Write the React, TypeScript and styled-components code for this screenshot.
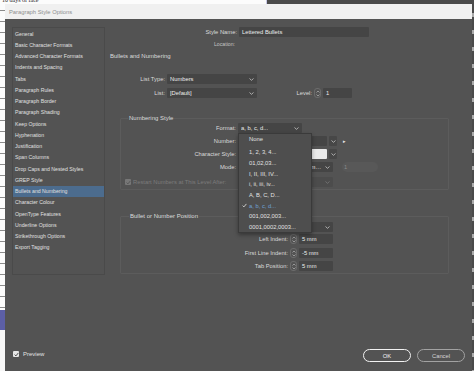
import React from 'react';
import styled, { createGlobalStyle } from 'styled-components';

const GlobalStyle = createGlobalStyle`
  html, body { margin: 0; padding: 0; background: #4b4b4b; }
  body {
    width: 474px;
    height: 371px;
    overflow: hidden;
    font-family: "Liberation Sans", Arial, sans-serif;
  }
  * { box-sizing: border-box; }
`;

const Screen = styled.div`
  width: 474px;
  height: 371px;
  display: flex;
  flex-direction: column;
  overflow: hidden;
`;

/* document visible behind the dialog */
const TopStrip = styled.div`
  height: 4px;
  flex-shrink: 0;
  display: flex;
`;

const TopDoc = styled.div`
  width: 267px;
  background: #fcfcfc;
  overflow: hidden;
  border-right: 1px solid #c9c9e6;
  span {
    display: block;
    margin: -3px 0 0 2px;
    font: 6px/6px "Liberation Serif", serif;
    color: #222;
  }
`;

const TopDark = styled.div`
  flex: 1;
  background: #4a4a4a;
`;

const Middle = styled.div`
  flex: 1;
  display: flex;
  min-height: 0;
`;

const LeftDoc = styled.div`
  width: 5px;
  flex-shrink: 0;
  display: flex;
  flex-direction: column;
  background: repeating-linear-gradient(
    to bottom,
    #fbfbfb 0 6px,
    #8a8a8a 6px 7px,
    #fbfbfb 7px 11px
  );
`;

const LeftGap = styled.div<{ $h: number }>`
  height: ${(p) => p.$h}px;
  flex-shrink: 0;
`;

const LeftBlock = styled.div`
  height: 20px;
  background: #5c5fa6;
`;

const LeftRest = styled.div`
  flex: 1;
  background: #f7f7f7;
`;

const RightStrip = styled.div`
  width: 2px;
  flex-shrink: 0;
  background: repeating-linear-gradient(
    to bottom,
    #4a4a4a 0 9px,
    #a9a9a9 9px 13px,
    #4a4a4a 13px 17px
  );
`;

/* dialog */
const Dialog = styled.div`
  width: 467px;
  flex-shrink: 0;
  display: flex;
  flex-direction: column;
  position: relative;
  background: #535353;
  color: #dadada;
`;

const TitleBar = styled.div`
  height: 15px;
  flex-shrink: 0;
  display: flex;
  align-items: center;
  padding-left: 4px;
  background: #f0f0f0;
  color: #8e8e8e;
  font-size: 5.8px;
`;

const Body = styled.div`
  flex: 1;
  display: flex;
  padding: 8px 0 0 7px;
  min-height: 0;
`;

const SideList = styled.div`
  width: 93px;
  height: 248px;
  flex-shrink: 0;
  border: 1px solid #4a4a4a;
  font-size: 5.2px;
  color: #e0e0e0;
`;

const SideItem = styled.div<{ $active?: boolean }>`
  height: 11.25px;
  display: flex;
  align-items: center;
  padding-left: 2px;
  white-space: nowrap;
  background: ${(p) => (p.$active ? '#4c6c8e' : 'transparent')};
`;

const Main = styled.div`
  margin-left: 5px;
  width: 362px;
  display: flex;
  flex-direction: column;
  font-size: 5.8px;
`;

const Row = styled.div<{ $mt?: number; $pl?: number }>`
  height: 10px;
  flex-shrink: 0;
  display: flex;
  align-items: center;
  gap: 2px;
  margin-top: ${(p) => p.$mt ?? 0}px;
  padding-left: ${(p) => p.$pl ?? 0}px;
`;

const Label = styled.div<{ $w: number; $left?: boolean; $dim?: boolean }>`
  width: ${(p) => p.$w}px;
  flex-shrink: 0;
  text-align: ${(p) => (p.$left ? 'left' : 'right')};
  white-space: nowrap;
  color: ${(p) => (p.$dim ? '#7c7c7c' : '#dadada')};
`;

const SmallLabel = styled(Label)`
  font-size: 5.2px;
  color: #c4c4c4;
`;

const Heading = styled.div<{ $mt?: number }>`
  height: 10px;
  display: flex;
  align-items: center;
  margin-top: ${(p) => p.$mt ?? 0}px;
  font-size: 6px;
  color: #dcdcdc;
`;

const Field = styled.div<{ $w: number; $light?: boolean; $off?: boolean }>`
  width: ${(p) => p.$w}px;
  height: 10px;
  flex-shrink: 0;
  display: flex;
  align-items: center;
  padding: 0 3px;
  border-radius: 1px;
  background: ${(p) => (p.$light ? '#e9e9e9' : p.$off ? '#4c4c4c' : '#454545')};
  color: ${(p) => (p.$off ? '#7a7a7a' : '#ececec')};
  overflow: hidden;
  white-space: nowrap;
`;

const SelectBox = styled(Field)`
  justify-content: space-between;
  gap: 2px;
  span {
    overflow: hidden;
    text-overflow: ellipsis;
    white-space: nowrap;
  }
  svg { flex-shrink: 0; }
`;

const ChevButton = styled.div`
  width: 8px;
  height: 10px;
  flex-shrink: 0;
  display: flex;
  align-items: center;
  justify-content: center;
  border-radius: 1px;
  background: #474747;
`;

const Pill = styled.div`
  width: 36px;
  height: 10px;
  margin-left: 7px;
  display: flex;
  align-items: center;
  padding-left: 2px;
  border-radius: 5px;
  background: #585858;
  color: #8a8a8a;
`;

const Tiny = styled.span`
  margin-left: 4px;
  font-size: 5px;
  color: #e8e8e8;
`;

const SpinBox = styled.div`
  width: 7px;
  height: 10px;
  flex-shrink: 0;
  display: flex;
  align-items: center;
  justify-content: center;
  border: 1px solid #6b6b6b;
  border-radius: 3px;
`;

const Group = styled.fieldset<{ $mt: number }>`
  margin: ${(p) => p.$mt}px 0 0 10px;
  width: 329px;
  padding: 0 0 2px 0;
  min-inline-size: 0;
  border: 1px solid #5c5c5c;
  border-radius: 1px;
  display: flex;
  flex-direction: column;
`;

const Legend = styled.legend<{ $ml: number }>`
  margin-left: ${(p) => p.$ml}px;
  padding: 0 1px;
  font-size: 6px;
  line-height: 8px;
  color: #dcdcdc;
`;

const CheckBox = styled.div<{ $off?: boolean }>`
  width: 6px;
  height: 6px;
  flex-shrink: 0;
  display: flex;
  align-items: center;
  justify-content: center;
  border-radius: 1px;
  background: ${(p) => (p.$off ? '#777' : '#e6e6e6')};
`;

const Footer = styled.div`
  height: 31px;
  flex-shrink: 0;
  display: flex;
  align-items: flex-start;
  padding: 9px 7px 0 8px;
`;

const Preview = styled.div`
  margin-top: 2px;
  display: flex;
  align-items: center;
  gap: 4px;
  font-size: 6px;
  color: #e2e2e2;
`;

const Buttons = styled.div`
  margin-left: auto;
  display: flex;
  gap: 6px;
`;

const Button = styled.div<{ $primary?: boolean }>`
  width: 48px;
  height: 13px;
  display: flex;
  align-items: center;
  justify-content: center;
  border-radius: 7px;
  font-size: 5.8px;
  border: ${(p) => (p.$primary ? '1.5px solid #f2f2f2' : '1px solid #a2a2a2')};
  color: ${(p) => (p.$primary ? '#f4f4f4' : '#d6d6d6')};
`;

/* open Format menu */
const Menu = styled.div`
  position: absolute;
  left: 233px;
  top: 129px;
  width: 74px;
  border: 1px solid #3a3a3a;
  background: #4e4e4e;
  box-shadow: 0 2px 4px rgba(0, 0, 0, 0.35);
  font-size: 5.8px;
`;

const MenuItem = styled.div<{ $selected?: boolean; $sep?: boolean }>`
  height: 10.7px;
  display: flex;
  align-items: center;
  padding-left: 10px;
  position: relative;
  white-space: nowrap;
  margin-bottom: ${(p) => (p.$sep ? '2.3px' : '0')};
  color: ${(p) => (p.$selected ? '#6ea2d8' : '#e2e2e2')};
  svg {
    position: absolute;
    left: 3px;
    top: 3px;
  }
`;

const Chevron = ({ color = '#c8c8c8' }: { color?: string }) => (
  <svg width="5" height="3" viewBox="0 0 5 3">
    <path d="M0.5 0.5 L2.5 2.3 L4.5 0.5" fill="none" stroke={color} strokeWidth="0.8" />
  </svg>
);

const Spinner = () => (
  <SpinBox>
    <svg width="4" height="7" viewBox="0 0 4 7">
      <path d="M0.5 2.5 L2 1 L3.5 2.5 M0.5 4.5 L2 6 L3.5 4.5" fill="none" stroke="#b5b5b5" strokeWidth="0.7" />
    </svg>
  </SpinBox>
);

const Check = ({ color }: { color: string }) => (
  <svg width="5" height="5" viewBox="0 0 5 5">
    <path d="M0.6 2.6 L1.9 3.9 L4.4 0.9" fill="none" stroke={color} strokeWidth="0.9" />
  </svg>
);

const Select = ({ w, text, off }: { w: number; text?: string; off?: boolean }) => (
  <SelectBox $w={w} $off={off}>
    <span>{text}</span>
    <Chevron color={off ? '#7a7a7a' : '#c8c8c8'} />
  </SelectBox>
);

const sections = [
  'General',
  'Basic Character Formats',
  'Advanced Character Formats',
  'Indents and Spacing',
  'Tabs',
  'Paragraph Rules',
  'Paragraph Border',
  'Paragraph Shading',
  'Keep Options',
  'Hyphenation',
  'Justification',
  'Span Columns',
  'Drop Caps and Nested Styles',
  'GREP Style',
  'Bullets and Numbering',
  'Character Colour',
  'OpenType Features',
  'Underline Options',
  'Strikethrough Options',
  'Export Tagging',
];

const formats = [
  'None',
  '1, 2, 3, 4...',
  '01,02,03...',
  'I, II, III, IV...',
  'i, ii, iii, iv...',
  'A, B, C, D...',
  'a, b, c, d...',
  '001,002,003...',
  '0001,0002,0003...',
];

export default function App() {
  return (
    <Screen>
      <GlobalStyle />
      <TopStrip>
        <TopDoc>
          <span>10 days of face</span>
        </TopDoc>
        <TopDark />
      </TopStrip>
      <Middle>
        <LeftDoc>
          <LeftGap $h={306} />
          <LeftBlock />
          <LeftRest />
        </LeftDoc>

        <Dialog>
          <TitleBar>Paragraph Style Options</TitleBar>
          <Body>
            <SideList>
              {sections.map((s) => (
                <SideItem key={s} $active={s === 'Bullets and Numbering'}>
                  {s}
                </SideItem>
              ))}
            </SideList>

            <Main>
              <Row>
                <Label $w={127}>Style Name:</Label>
                <Field $w={130}>Lettered Bullets</Field>
              </Row>
              <Row $mt={2}>
                <SmallLabel $w={125}>Location:</SmallLabel>
              </Row>
              <Heading $mt={2}>Bullets and Numbering</Heading>
              <Row $mt={13}>
                <Label $w={55}>List Type:</Label>
                <Select w={90} text="Numbers" />
              </Row>
              <Row $mt={4}>
                <Label $w={55}>List:</Label>
                <Select w={90} text="[Default]" />
                <Label $w={53}>Level:</Label>
                <Spinner />
                <Field $w={29}>1</Field>
              </Row>

              <Group $mt={16}>
                <Legend $ml={7}>Numbering Style</Legend>
                <Row $mt={1}>
                  <Label $w={115}>Format:</Label>
                  <Select w={64} text="a, b, c, d..." />
                </Row>
                <Row $mt={3}>
                  <Label $w={115}>Number:</Label>
                  <Field $w={89} />
                  <ChevButton>
                    <Chevron />
                  </ChevButton>
                  <Tiny>▸</Tiny>
                </Row>
                <Row $mt={3}>
                  <Label $w={115}>Character Style:</Label>
                  <Field $w={89} $light />
                  <ChevButton>
                    <Chevron />
                  </ChevButton>
                </Row>
                <Row $mt={3}>
                  <Label $w={115}>Mode:</Label>
                  <Select w={95} text="Continue from Previous Number" />
                  <Pill>1</Pill>
                </Row>
                <Row $mt={5} $pl={4}>
                  <CheckBox $off>
                    <Check color="#555" />
                  </CheckBox>
                  <Label $w={103} $left $dim>
                    Restart Numbers at This Level After:
                  </Label>
                  <Select w={95} off />
                </Row>
              </Group>

              <Group $mt={22}>
                <Legend $ml={8}>Bullet or Number Position</Legend>
                <Row $mt={2}>
                  <Label $w={167} />
                  <Select w={43} />
                </Row>
                <Row $mt={2}>
                  <Label $w={167}>Left Indent:</Label>
                  <Spinner />
                  <Field $w={34}>5 mm</Field>
                </Row>
                <Row $mt={4}>
                  <Label $w={167}>First Line Indent:</Label>
                  <Spinner />
                  <Field $w={34}>-5 mm</Field>
                </Row>
                <Row $mt={3}>
                  <Label $w={167}>Tab Position:</Label>
                  <Spinner />
                  <Field $w={34}>5 mm</Field>
                </Row>
              </Group>
            </Main>
          </Body>

          <Footer>
            <Preview>
              <CheckBox>
                <Check color="#3a3a3a" />
              </CheckBox>
              Preview
            </Preview>
            <Buttons>
              <Button $primary>OK</Button>
              <Button>Cancel</Button>
            </Buttons>
          </Footer>

          <Menu>
            {formats.map((f, i) => (
              <MenuItem key={f} $sep={i === 0} $selected={f === 'a, b, c, d...'}>
                {f === 'a, b, c, d...' && <Check color="#d8d8d8" />}
                {f}
              </MenuItem>
            ))}
          </Menu>
        </Dialog>

        <RightStrip />
      </Middle>
    </Screen>
  );
}
